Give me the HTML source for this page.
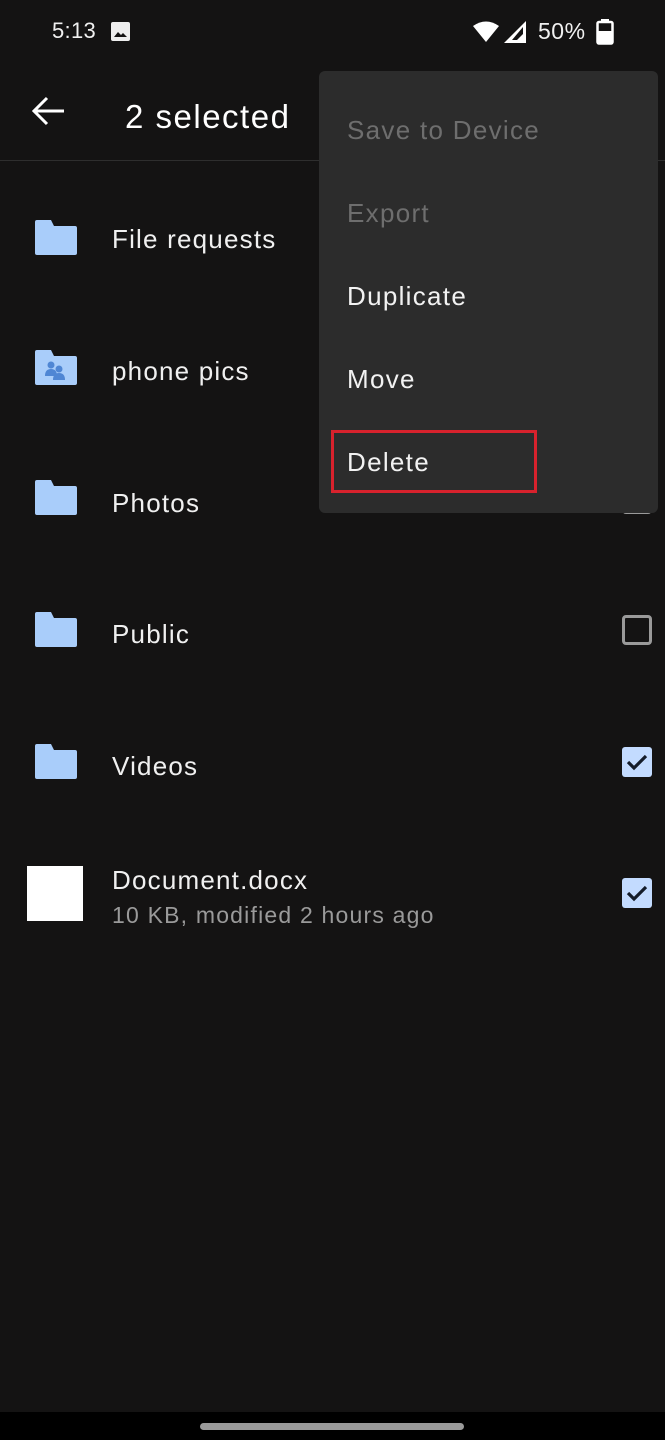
<!DOCTYPE html>
<html><head><meta charset="utf-8">
<style>
*{margin:0;padding:0;box-sizing:border-box}
body{width:665px;height:1440px;background:#141313;font-family:"Liberation Sans",sans-serif;color:#f0f0f0;position:relative;overflow:hidden}
.a{position:absolute}
.t{font-size:26px;white-space:nowrap;line-height:1;letter-spacing:1.2px}
.menu{left:319px;top:71px;width:339px;height:442px;background:#2c2c2c;border-radius:6px}
.mi{left:347px;font-size:26px;line-height:1;white-space:nowrap;letter-spacing:1.3px}
.cb{width:30px;height:30px;border-radius:4px}
</style></head><body>
<div class="a t" style="left:52px;top:20px;font-size:22px;letter-spacing:0.3px">5:13</div>
<svg class="a" style="left:110px;top:21px" width="21" height="21" viewBox="0 0 21 21"><rect x="1" y="1" width="19" height="19" rx="2" fill="#eee"/><path d="M4 16l4-5 3 3 2-2 4 4z" fill="#141313"/></svg>
<svg class="a" style="left:472px;top:21px" width="28" height="22" viewBox="0 0 28 22"><path d="M1 5Q14-4 27 5L14 21Z" fill="#fff"/></svg>
<svg class="a" style="left:503px;top:20px" width="24" height="24" viewBox="0 0 24 24"><path d="M23 1V23H1Z" fill="#fff"/><path d="M20 7V20H9Z" fill="#141313"/><path d="M20 14V20H14" fill="#fff"/></svg>
<div class="a t" style="left:538px;top:20px;font-size:23px;letter-spacing:0.5px">50%</div>
<svg class="a" style="left:596px;top:19px" width="18" height="26" viewBox="0 0 18 26"><rect x="5" y="0" width="8" height="3" fill="#fff"/><rect x="1.5" y="3" width="15" height="21.5" rx="1.5" fill="none" stroke="#fff" stroke-width="2.5"/><rect x="2" y="12" width="14" height="12" fill="#fff"/></svg>

<svg class="a" style="left:30px;top:95px" width="38" height="32" viewBox="0 0 38 32"><path d="M34 16H4M17 3L4 16l13 13" fill="none" stroke="#fff" stroke-width="3"/></svg>
<div class="a t" style="left:125px;top:100px;font-size:33px;color:#fff;letter-spacing:1.5px">2 selected</div>
<div class="a" style="left:0;top:160px;width:665px;height:1px;background:#2e2e2e"></div>

<svg width="0" height="0" style="position:absolute"><defs><symbol id="f" viewBox="0 0 42 35"><path d="M0 2Q0 0 2 0H16L19 6H40Q42 6 42 8V33Q42 35 40 35H2Q0 35 0 33Z" fill="#a9cdfa"/></symbol></defs></svg>
<svg class="a" style="left:35px;top:220px" width="42" height="35"><use href="#f"/></svg>
<div class="a t" style="left:112px;top:226px">File requests</div>
<svg class="a" style="left:35px;top:350px" width="42" height="35"><use href="#f"/><circle cx="16" cy="15" r="3.5" fill="#4f86d4"/><path d="M10 26q0-7 6-7t6 7z" fill="#4f86d4"/><circle cx="24" cy="19" r="3.5" fill="#4f86d4"/><path d="M18 30q0-7 6-7t6 7z" fill="#4f86d4"/></svg>
<div class="a t" style="left:112px;top:358px">phone pics</div>
<svg class="a" style="left:35px;top:480px" width="42" height="35"><use href="#f"/></svg>
<div class="a t" style="left:112px;top:490px">Photos</div>
<svg class="a" style="left:35px;top:612px" width="42" height="35"><use href="#f"/></svg>
<div class="a t" style="left:112px;top:621px">Public</div>
<svg class="a" style="left:35px;top:744px" width="42" height="35"><use href="#f"/></svg>
<div class="a t" style="left:112px;top:753px">Videos</div>
<div class="a" style="left:27px;top:866px;width:56px;height:55px;background:#fff"></div>
<div class="a t" style="left:112px;top:867px">Document.docx</div>
<div class="a t" style="left:112px;top:904px;font-size:23px;color:#9a9a9a">10 KB, modified 2 hours ago</div>

<div class="a cb" style="left:622px;top:484px;border:3px solid #9a9a9a"></div>
<div class="a cb" style="left:622px;top:615px;border:3px solid #9a9a9a"></div>
<svg class="a" style="left:621px;top:746px" width="32" height="32" viewBox="0 0 32 32"><rect x="1" y="1" width="30" height="30" rx="3" fill="#c3dbff"/><path d="M7 16l6 6 12-12" fill="none" stroke="#141c2a" stroke-width="3.2"/></svg>
<svg class="a" style="left:621px;top:877px" width="32" height="32" viewBox="0 0 32 32"><rect x="1" y="1" width="30" height="30" rx="3" fill="#c3dbff"/><path d="M7 16l6 6 12-12" fill="none" stroke="#141c2a" stroke-width="3.2"/></svg>

<div class="a menu"></div>
<div class="a mi" style="top:117px;color:#6e6e6e">Save to Device</div>
<div class="a mi" style="top:200px;color:#6e6e6e">Export</div>
<div class="a mi" style="top:283px;color:#f2f2f2">Duplicate</div>
<div class="a mi" style="top:366px;color:#f2f2f2">Move</div>
<div class="a mi" style="top:449px;color:#f2f2f2">Delete</div>
<div class="a" style="left:331px;top:430px;width:206px;height:63px;border:3px solid #d8222d"></div>

<div class="a" style="left:0;top:1412px;width:665px;height:28px;background:#000"></div>
<div class="a" style="left:200px;top:1423px;width:264px;height:7px;border-radius:4px;background:#9a9a9a"></div>
</body></html>
